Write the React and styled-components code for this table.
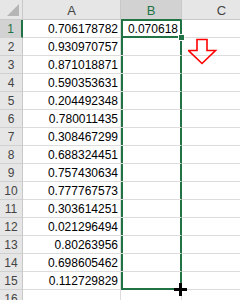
import React from "react";
import styled, { createGlobalStyle } from "styled-components";

const GREEN = "#217346";

const Global = createGlobalStyle`
  html, body { margin: 0; padding: 0; background: #fff; }
  body { width: 240px; height: 300px; overflow: hidden; font-family: "Liberation Sans", Arial, sans-serif; }
`;

const Sheet = styled.div`
  position: relative;
  width: 240px;
  height: 300px;
  overflow: hidden;
  display: grid;
  grid-template-columns: 23px 98px 61px 80px;
  grid-template-rows: 20px;
  grid-auto-rows: 18px;
`;

const Corner = styled.div`
  box-sizing: border-box;
  background: #e6e6e6;
  border-right: 1px solid #c8c8c8;
  border-bottom: 1px solid #c8c8c8;
  display: flex;
  align-items: flex-end;
  justify-content: flex-end;
  padding: 0 3px 3px 0;
  &::after {
    content: "";
    width: 0;
    height: 0;
    border-left: 12px solid transparent;
    border-bottom: 12px solid #b5b5b5;
  }
`;

const ColHead = styled.div`
  box-sizing: border-box;
  background: ${(p) => (p.$active ? "#d2d2d2" : "#e6e6e6")};
  color: ${(p) => (p.$active ? GREEN : "#444")};
  border-right: 1px solid #c8c8c8;
  border-bottom: 1px solid ${(p) => (p.$active ? GREEN : "#c8c8c8")};
  font-size: 13px;
  display: flex;
  align-items: flex-end;
  justify-content: center;
  padding-bottom: 2px;
  line-height: 1;
`;

const RowHead = styled.div`
  box-sizing: border-box;
  background: ${(p) => (p.$active ? "#d2d2d2" : "#e6e6e6")};
  color: ${(p) => (p.$active ? GREEN : "#444")};
  border-right: ${(p) => (p.$active ? `2px solid ${GREEN}` : "1px solid #c8c8c8")};
  border-bottom: 1px solid #d0d0d0;
  font-size: 12px;
  display: flex;
  align-items: flex-end;
  justify-content: center;
  padding-bottom: 2px;
  line-height: 1;
`;

const Cell = styled.div`
  box-sizing: border-box;
  position: relative;
  border-right: 1px solid #dcdcdc;
  border-bottom: 1px solid #dcdcdc;
  font-size: 12px;
  color: #000;
  display: flex;
  align-items: flex-end;
  justify-content: flex-end;
  padding: 0 2px 2px 0;
  line-height: 1;
  white-space: nowrap;
`;

/* cell inside the selected range: green edges drawn as inset shadows */
const RangeCell = styled(Cell)`
  border-right-color: ${GREEN};
  padding-right: 3px;
  box-shadow: inset 2px 0 0 ${GREEN}, inset -1px 0 0 ${GREEN}
    ${(p) => (p.$top ? `, inset 0 1px 0 ${GREEN}` : "")}
    ${(p) => (p.$bottom ? `, inset 0 -1px 0 ${GREEN}` : "")};
  ${(p) => (p.$bottom ? `border-bottom-color: ${GREEN};` : "")}
`;

const Handle = styled.span`
  position: absolute;
  right: -4px;
  bottom: -4px;
  width: 5px;
  height: 5px;
  background: ${GREEN};
  border: 1px solid #fff;
  z-index: 2;
`;

const Overlay = styled.svg`
  position: absolute;
  pointer-events: none;
  z-index: 3;
`;

const values = [
  "0.706178782",
  "0.930970757",
  "0.871018871",
  "0.590353631",
  "0.204492348",
  "0.780011435",
  "0.308467299",
  "0.688324451",
  "0.757430634",
  "0.777767573",
  "0.303614251",
  "0.021296494",
  "0.80263956",
  "0.698605462",
  "0.112729829",
  "",
];

export default function App() {
  return (
    <>
      <Global />
      <Sheet>
        <Corner />
        <ColHead>A</ColHead>
        <ColHead $active>B</ColHead>
        <ColHead>C</ColHead>
        {values.map((v, i) => (
          <React.Fragment key={i}>
            <RowHead $active={i === 0}>{i + 1}</RowHead>
            <Cell>{v}</Cell>
            {i < 15 ? (
              <RangeCell $top={i === 0} $bottom={i === 0 || i === 14}>
                {i === 0 ? "0.070618" : ""}
                {i === 0 && <Handle />}
              </RangeCell>
            ) : (
              <Cell />
            )}
            <Cell />
          </React.Fragment>
        ))}
        <Overlay style={{ left: 188, top: 38 }} width="30" height="27" viewBox="0 0 30 27">
          <path
            d="M9 1.5 H19 V12.5 H27.5 L14 25.5 L0.5 12.5 H9 Z"
            fill="none"
            stroke="#ff0000"
            strokeWidth="1.6"
            strokeLinejoin="miter"
          />
        </Overlay>
        <Overlay style={{ left: 174, top: 283 }} width="13" height="13" viewBox="0 0 13 13">
          <path d="M5 0 H8 V5 H13 V8 H8 V13 H5 V8 H0 V5 H5 Z" fill="#000" />
        </Overlay>
      </Sheet>
    </>
  );
}
